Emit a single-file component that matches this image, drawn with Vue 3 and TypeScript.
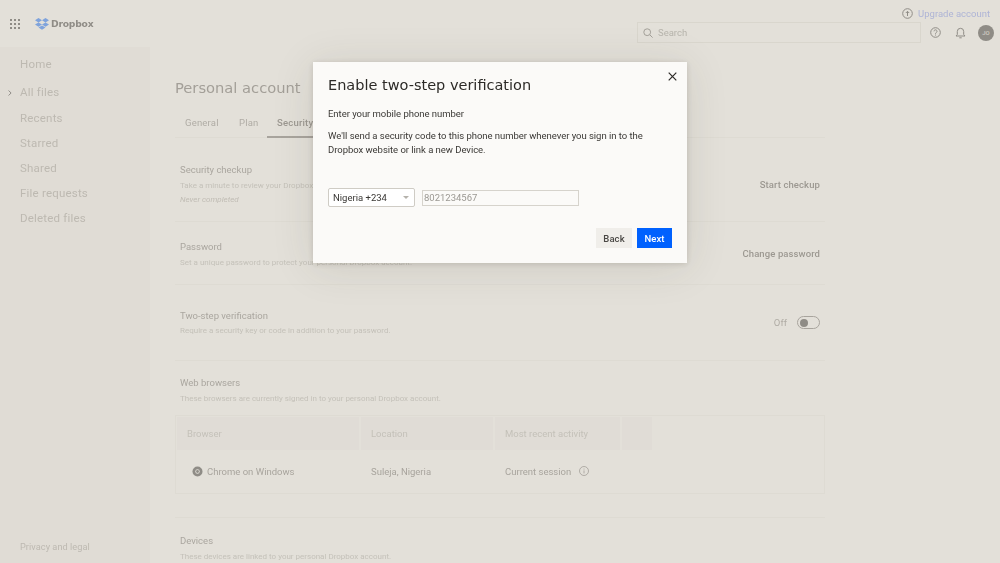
<script setup lang="ts">
const navItems: string[] = ['Recents', 'Starred', 'Shared', 'File requests', 'Deleted files']
</script>

<template>
  <div class="page">
    <header class="topbar">
      <div class="brand">
        <svg class="apps" width="10" height="10" viewBox="0 0 10 10" fill="#8f8c86">
          <template v-for="x in [0, 4, 8]" :key="x">
            <rect v-for="y in [0, 4, 8]" :key="y" :x="x" :y="y" width="2" height="2" />
          </template>
        </svg>
        <svg class="logo" width="14" height="12" viewBox="0 0 14 12" fill="#7fa3dc">
          <path d="M3.5 0 7 2.2 3.5 4.4 0 2.2zM10.5 0 14 2.2l-3.5 2.2L7 2.2zM0 6.6l3.5-2.2L7 6.6 3.5 8.8zM10.5 4.4 14 6.6l-3.5 2.2L7 6.6zM3.5 9.6 7 7.4l3.500 2.200L7 11.800z" />
        </svg>
        <span class="wordmark">Dropbox</span>
      </div>
      <div class="top-right">
        <div class="upgrade">
          <svg width="11" height="11" viewBox="0 0 11 11" fill="none" stroke="#8f8c86">
            <circle cx="5.5" cy="5.5" r="4.8" />
            <path d="M5.5 8V3.4M3.8 5 5.5 3.3 7.2 5" />
          </svg>
          <span>Upgrade account</span>
        </div>
        <div class="tools">
          <div class="search">
            <svg width="10" height="10" viewBox="0 0 10 10" fill="none" stroke="#a3a099" stroke-width="1">
              <circle cx="4.2" cy="4.2" r="3.4" />
              <path d="m6.8 6.8 2.8 2.8" />
            </svg>
            <span>Search</span>
          </div>
          <svg class="tool-icon" width="11" height="11" viewBox="0 0 11 11" fill="none" stroke="#8f8c86">
            <circle cx="5.5" cy="5.5" r="4.8" />
            <path d="M4 4.3a1.5 1.5 0 1 1 2.3 1.3c-.5.3-.8.6-.8 1.2M5.5 7.6v.9" />
          </svg>
          <svg class="tool-icon" width="11" height="12" viewBox="0 0 11 12" fill="none" stroke="#8f8c86">
            <path d="M1 9h9L8.700 7.500V4.500a3.200 3.200 0 0 0-6.400 0v3zM4.300 10.800h2.400" />
          </svg>
          <div class="avatar">JO</div>
        </div>
      </div>
    </header>

    <div class="body">
      <aside class="sidebar">
        <nav class="nav">
          <div class="nav-home">Home</div>
          <div class="nav-active">
            <svg class="chev" width="4" height="6" viewBox="0 0 4 6" fill="none" stroke="#8f8c86">
              <path d="m.6.5 2.500 2.500L.6 5.500" />
            </svg>
            All files
          </div>
          <div v-for="item in navItems" :key="item" class="nav-item">{{ item }}</div>
        </nav>
        <div class="legal">Privacy and legal</div>
      </aside>

      <main class="main">
        <h1 class="page-title">Personal account</h1>
        <div class="tabs">
          <span class="tab tab-general">General</span>
          <span class="tab tab-plan">Plan</span>
          <span class="tab tab-active">Security</span>
        </div>

        <section class="row row-checkup">
          <div>
            <div class="row-title">Security checkup</div>
            <div class="row-desc">Take a minute to review your Dropbox account security.</div>
            <div class="row-note">Never completed</div>
          </div>
          <span class="action">Start checkup</span>
        </section>

        <section class="row row-password">
          <div>
            <div class="row-title">Password</div>
            <div class="row-desc">Set a unique password to protect your personal Dropbox account.</div>
          </div>
          <span class="action">Change password</span>
        </section>

        <section class="row row-two-step">
          <div>
            <div class="row-title">Two-step verification</div>
            <div class="row-desc row-desc-tight">Require a security key or code in addition to your password.</div>
          </div>
          <div class="toggle-wrap">
            <span class="off">Off</span>
            <span class="toggle"><i class="knob"></i></span>
          </div>
        </section>

        <section class="row-browsers">
          <div class="row-title">Web browsers</div>
          <div class="row-desc">These browsers are currently signed in to your personal Dropbox account.</div>
          <div class="table">
            <div class="th">Browser</div>
            <div class="th">Location</div>
            <div class="th">Most recent activity</div>
            <div class="th"></div>
            <div class="td td-browser">
              <svg width="11" height="11" viewBox="0 0 11 11">
                <circle cx="5.500" cy="5.500" r="5" fill="#8f8c86" />
                <circle cx="5.500" cy="5.500" r="2.200" fill="#e3e0d9" />
                <circle cx="5.500" cy="5.500" r="1.400" fill="#8f8c86" />
              </svg>
              Chrome on Windows
            </div>
            <div class="td td-location">Suleja, Nigeria</div>
            <div class="td td-session">
              Current session
              <svg width="10" height="10" viewBox="0 0 10 10" fill="none" stroke="#a3a099" stroke-width=".8">
                <circle cx="5" cy="5" r="4.500" />
                <path d="M5 4.400v3M5 2.600v.9" />
              </svg>
            </div>
          </div>
        </section>

        <section class="row-devices">
          <div class="row-title">Devices</div>
          <div class="row-desc">These devices are linked to your personal Dropbox account.</div>
        </section>
      </main>
    </div>

    <div class="modal" role="dialog">
      <svg class="close" width="9" height="9" viewBox="0 0 9 9" fill="none" stroke="#2c2a27" stroke-width="1.200">
        <path d="m.7.7 7.600 7.600M8.300.7.700 8.300" />
      </svg>
      <h2 class="modal-title">Enable two-step verification</h2>
      <p class="lead">Enter your mobile phone number</p>
      <p class="copy">We'll send a security code to this phone number whenever you sign in to the<br />Dropbox website or link a new Device.</p>
      <div class="phone">
        <div class="select">
          <span>Nigeria +234</span>
          <i class="caret"></i>
        </div>
        <div class="input">8021234567</div>
      </div>
      <div class="buttons">
        <button class="btn btn-back" type="button">Back</button>
        <button class="btn btn-next" type="button">Next</button>
      </div>
    </div>
  </div>
</template>

<style>
html, body { margin: 0; background: #e3e0d9; }
</style>

<style scoped>
.page {
  position: relative;
  width: 1000px;
  height: 563px;
  overflow: hidden;
  background: #e3e0d9;
  font-family: Roboto, "Liberation Sans", sans-serif;
  color: #a8a49d;
}
.topbar {
  height: 47px;
  display: flex;
  justify-content: space-between;
  flex-shrink: 0;
  filter: blur(0.3px);
}
.brand {
  display: flex;
  align-items: center;
  padding-left: 10px;
  height: 47px;
}
.logo { margin-left: 15px; }
.wordmark {
  margin-left: 2px;
  font-family: "DejaVu Sans", sans-serif;
  font-size: 9.200px;
  font-weight: 700;
  color: #8f8c86;
  letter-spacing: -0.2px;
}
.top-right {
  width: 363px;
  padding-top: 7px;
  box-sizing: border-box;
}
.upgrade {
  display: flex;
  align-items: center;
  justify-content: flex-end;
  gap: 5px;
  padding-right: 10px;
  height: 12px;
  font-size: 9.500px;
  color: #aeb4d6;
}
.tools {
  display: flex;
  align-items: center;
  margin-top: 3px;
}
.search {
  width: 284px;
  height: 21px;
  box-sizing: border-box;
  border: 1px solid #d9d6cd;
  display: flex;
  align-items: center;
  gap: 5px;
  padding-left: 5px;
  font-size: 9.500px;
  color: #b7b4ac;
}
.tool-icon { margin-left: 9px; }
.tool-icon + .tool-icon { margin-left: 14px; }
.avatar {
  width: 16px;
  height: 16px;
  margin-left: 12px;
  border-radius: 50%;
  background: #8f8c86;
  color: #c7c3bb;
  font-size: 6px;
  font-weight: 700;
  display: flex;
  align-items: center;
  justify-content: center;
}
.body {
  display: flex;
  height: 516px;
  filter: blur(0.3px);
}
.sidebar {
  width: 150px;
  flex-shrink: 0;
  background: #e0dcd5;
  box-sizing: border-box;
  padding: 10px 0 11px 20px;
  display: flex;
  flex-direction: column;
  justify-content: space-between;
}
.nav {
  font-size: 11.500px;
  letter-spacing: 0.2px;
  color: #bdb9b1;
}
.nav-home { height: 15px; line-height: 15px; }
.nav-active {
  position: relative;
  margin-top: 13px;
  height: 15px;
  line-height: 15px;
  margin-bottom: 6px;
}
.chev { position: absolute; left: -12px; top: 5px; }
.nav-item { height: 25px; line-height: 25px; }
.legal {
  font-size: 9.200px;
  color: #bdb9b1;
  letter-spacing: 0.05px;
}
.main {
  flex: 1;
  padding: 0 175px 0 25px;
  min-width: 0;
}
.page-title {
  margin: 31px 0 0;
  height: 20px;
  line-height: 20px;
  font-family: "DejaVu Sans", sans-serif;
  font-weight: 400;
  font-size: 14.700px;
  color: #a39f98;
}
.tabs {
  margin-top: 15px;
  height: 24px;
  border-bottom: 1px solid #dedbd3;
  display: flex;
  font-size: 9.500px;
  color: #b0aca5;
  letter-spacing: 0.2px;
}
.tab { height: 24px; line-height: 20px; box-sizing: border-box; }
.tab-general { padding-left: 10px; width: 64px; }
.tab-plan { width: 28px; }
.tab-active {
  width: 60px;
  padding-left: 10px;
  color: #9c9891;
  font-weight: 500;
  border-bottom: 2px solid #a8a49d;
  height: 25px;
}
.row {
  display: flex;
  justify-content: space-between;
  align-items: flex-start;
  padding: 0 5px;
  border-bottom: 1px solid #dedbd3;
  box-sizing: border-box;
}
.row-checkup { height: 84px; }
.row-checkup > div:first-child { padding-top: 26px; }
.row-checkup .action { margin-top: 41px; }
.row-password { height: 63px; }
.row-password > div:first-child { padding-top: 19px; }
.row-password .action { margin-top: 26px; }
.row-two-step { height: 76px; }
.row-two-step > div:first-child { padding-top: 25px; }
.row-two-step .toggle-wrap { margin-top: 31px; }
.row-title {
  font-size: 9.500px;
  line-height: 12px;
  color: #aaa69f;
}
.row-desc {
  margin-top: 4px;
  font-size: 8px;
  line-height: 12px;
  color: #c4c1b9;
  white-space: nowrap;
}
.row-desc-tight { margin-top: 3px; }
.row-note {
  margin-top: 2px;
  font-size: 8px;
  line-height: 12px;
  font-style: italic;
  color: #c0bcb4;
}
.action {
  font-size: 9.500px;
  font-weight: 500;
  color: #9c9891;
  letter-spacing: 0.1px;
}
.toggle-wrap { display: flex; align-items: center; gap: 10px; }
.off { font-size: 9.500px; color: #b0aca5; }
.toggle {
  width: 23px;
  height: 13px;
  box-sizing: border-box;
  border: 1px solid #a8a49d;
  border-radius: 7px;
  display: flex;
  align-items: center;
  padding-left: 2px;
}
.knob {
  width: 8px;
  height: 8px;
  border-radius: 50%;
  background: #8f8c86;
}
.row-browsers {
  padding: 16px 5px 0;
  height: 157px;
  box-sizing: border-box;
  border-bottom: 1px solid #dedbd3;
}
.table {
  margin: 10px -5px 0;
  height: 79px;
  box-sizing: border-box;
  border: 1px solid #dedbd3;
  padding-top: 1px;
  padding-left: 1px;
  display: grid;
  grid-template-columns: 182px 132px 125px 30px;
  grid-template-rows: 33px 43px;
  column-gap: 2px;
  justify-content: start;
}
.th {
  background: #e0dcd6;
  font-size: 9.500px;
  line-height: 33px;
  padding-left: 10px;
  color: #c4c1b9;
}
.td {
  font-size: 9.500px;
  display: flex;
  align-items: center;
  color: #a8a49d;
  white-space: nowrap;
  padding-bottom: 1px;
}
.td-browser { padding-left: 15px; gap: 4px; }
.td-location { padding-left: 10px; }
.td-session { padding-left: 10px; gap: 8px; grid-column: span 2; }
.row-devices { padding: 17px 5px 0; }
.modal {
  position: absolute;
  left: 313px;
  top: 62px;
  width: 374px;
  height: 201px;
  box-sizing: border-box;
  background: #fbfaf8;
  box-shadow: 0 4px 40px rgba(60, 55, 45, 0.12), 0 1px 6px rgba(60, 55, 45, 0.16);
  padding: 14px 15px 15px;
  display: flex;
  flex-direction: column;
  color: #3a3835;
}
.close { position: absolute; right: 10px; top: 10px; }
.modal-title {
  margin: 0;
  height: 18px;
  line-height: 18px;
  font-family: "DejaVu Sans", sans-serif;
  font-weight: 400;
  font-size: 14.500px;
  color: #2c2a27;
}
.lead {
  margin: 13px 0 0;
  font-size: 9.500px;
  line-height: 14px;
  letter-spacing: -0.04px;
}
.copy {
  margin: 8px 0 0;
  font-size: 9.500px;
  line-height: 14px;
  letter-spacing: -0.04px;
}
.phone {
  margin-top: 31px;
  display: flex;
  align-items: center;
  gap: 7px;
}
.select {
  width: 87px;
  height: 19px;
  box-sizing: border-box;
  border: 1px solid #cfccc5;
  background: #fff;
  border-radius: 2px;
  display: flex;
  align-items: center;
  justify-content: space-between;
  padding: 0 5px 0 4px;
  font-size: 9.500px;
  color: #3a3835;
}
.caret {
  width: 0;
  height: 0;
  border-left: 3px solid transparent;
  border-right: 3px solid transparent;
  border-top: 3px solid #b5b2ab;
}
.input {
  width: 157px;
  height: 16px;
  box-sizing: border-box;
  border: 1px solid #d6d3cc;
  font-size: 9.500px;
  line-height: 14px;
  padding-left: 1px;
  color: #9b9892;
}
.buttons {
  margin-top: auto;
  display: flex;
  justify-content: flex-end;
  gap: 5px;
}
.btn {
  height: 20px;
  border: 0;
  padding: 0;
  font-family: inherit;
  font-size: 9.500px;
  font-weight: 500;
  letter-spacing: 0.1px;
}
.btn-back { width: 36px; background: #f0eeea; color: #4a4845; }
.btn-next { width: 35px; background: #0061fe; color: #fff; }
</style>
